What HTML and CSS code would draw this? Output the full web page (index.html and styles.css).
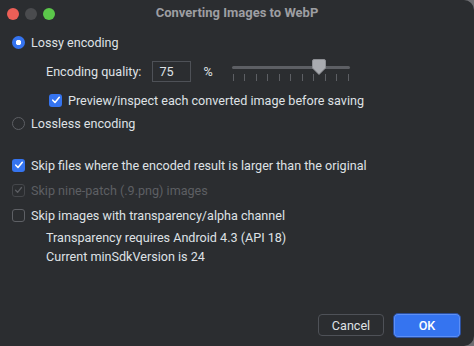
FILE: index.html
```html
<!DOCTYPE html>
<html>
<head>
<meta charset="utf-8">
<link rel="stylesheet" href="styles.css">
</head>
<body>
<div class="window">
  <div class="titlebar">
    <div class="lights">
      <span class="light red"></span>
      <span class="light gray"></span>
      <span class="light green"></span>
    </div>
    <div class="title">Converting Images to WebP</div>
  </div>
  <div class="content">
    <div class="row radio-row first">
      <span class="radio on"></span>
      <span class="label">Lossy encoding</span>
    </div>
    <div class="row quality-row">
      <span class="label">Encoding quality:</span>
      <span class="input">75</span>
      <span class="label pct">%</span>
      <div class="slider">
        <div class="track"></div>
        <svg class="thumb" width="14" height="16" viewBox="0 0 14 16"><path d="M2 0.5 H12 A1.5 1.5 0 0 1 13.5 2 V9 L7 15.5 L0.5 9 V2 A1.5 1.5 0 0 1 2 0.5 Z" fill="#a9abb0" stroke="#8c8e93" stroke-width="1"/></svg>
        <div class="ticks">
          <span></span><span></span><span></span><span></span><span></span><span></span><span></span><span></span><span></span><span></span><span></span>
        </div>
      </div>
    </div>
    <div class="row check-row preview-row">
      <span class="check on"><svg width="12" height="12" viewBox="0 0 12 12"><path d="M2.8 6.2 L5 8.5 L9.3 3.3" fill="none" stroke="#fff" stroke-width="1.6" stroke-linecap="round" stroke-linejoin="round"/></svg></span>
      <span class="label">Preview/inspect each converted image before saving</span>
    </div>
    <div class="row radio-row lossless-row">
      <span class="radio"></span>
      <span class="label">Lossless encoding</span>
    </div>
    <div class="row check-row skip-row">
      <span class="check on"><svg width="12" height="12" viewBox="0 0 12 12"><path d="M2.8 6.2 L5 8.5 L9.3 3.3" fill="none" stroke="#fff" stroke-width="1.6" stroke-linecap="round" stroke-linejoin="round"/></svg></span>
      <span class="label">Skip files where the encoded result is larger than the original</span>
    </div>
    <div class="row check-row next disabled">
      <span class="check dis"><svg width="12" height="12" viewBox="0 0 12 12"><path d="M2.8 6.2 L5 8.5 L9.3 3.3" fill="none" stroke="#5b5d62" stroke-width="1.4" stroke-linecap="round" stroke-linejoin="round"/></svg></span>
      <span class="label">Skip nine-patch (.9.png) images</span>
    </div>
    <div class="row check-row next">
      <span class="check"></span>
      <span class="label">Skip images with transparency/alpha channel</span>
    </div>
    <div class="note first-note">Transparency requires Android 4.3 (API 18)</div>
    <div class="note">Current minSdkVersion is 24</div>
  </div>
  <div class="buttons">
    <button class="btn cancel">Cancel</button>
    <button class="btn ok">OK</button>
  </div>
</div>
</body>
</html>
```
FILE: styles.css
```css
html, body {
  margin: 0;
  padding: 0;
  background: #6e6e72;
  width: 474px;
  height: 346px;
  overflow: hidden;
}
.window {
  width: 474px;
  height: 346px;
  background: #2b2d30;
  border-radius: 0 10px 10px 0;
  display: flex;
  flex-direction: column;
  font-family: Roboto, "Noto Sans", sans-serif;
  font-size: 12.6px;
  color: #dfe1e5;
  box-sizing: border-box;
}
.titlebar {
  height: 27px;
  display: flex;
  align-items: center;
  position: relative;
}
.lights {
  display: flex;
  gap: 6px;
  padding-left: 7px;
}
.light {
  width: 12px;
  height: 12px;
  border-radius: 50%;
  display: block;
}
.light.red { background: #ec5f57; }
.light.gray { background: #4a4b4e; }
.light.green { background: #5bc74a; }
.title {
  position: absolute;
  left: 0;
  right: 0;
  top: 0;
  height: 26px;
  line-height: 26px;
  text-align: center;
  font-weight: 700;
  color: #9d9ea2;
  font-size: 13px;
  pointer-events: none;
}
.content {
  flex: 1;
  display: flex;
  flex-direction: column;
  padding-left: 12px;
}
.row {
  display: flex;
  align-items: center;
  height: 20px;
}
.first { margin-top: 5px; }
.radio {
  width: 13px;
  height: 13px;
  border-radius: 50%;
  border: 1px solid #5e6065;
  box-sizing: border-box;
  margin-right: 6px;
  flex: none;
  background: #2b2d30;
}
.radio.on {
  border: none;
  background: radial-gradient(circle, #ffffff 0 2.5px, #3574f0 3px);
}
.quality-row {
  margin-top: 8px;
  height: 22px;
  padding-left: 34px;
}
.input {
  width: 39px;
  height: 21px;
  box-sizing: border-box;
  border: 1px solid #4e5157;
  margin-left: 11px;
  padding-left: 6px;
  line-height: 19px;
  display: block;
}
.pct { margin-left: 12px; }
.slider {
  margin-left: 19px;
  width: 118px;
  height: 22px;
  position: relative;
}
.track {
  position: absolute;
  left: 0;
  right: 0;
  top: 6px;
  height: 3px;
  border-radius: 2px;
  background: #5d5f64;
}
.thumb {
  position: absolute;
  left: 80px;
  top: -1px;
}
.ticks {
  position: absolute;
  left: 1px;
  right: 1px;
  top: 14px;
  display: flex;
  justify-content: space-between;
}
.ticks span {
  width: 1px;
  height: 7px;
  background: #5d5f64;
  display: block;
}
.check {
  width: 13px;
  height: 13px;
  box-sizing: border-box;
  border-radius: 3px;
  border: 1px solid #5e6065;
  margin-right: 6px;
  flex: none;
  display: flex;
  align-items: center;
  justify-content: center;
}
.check.on {
  background: #3574f0;
  border: none;
}
.check.dis {
  border-color: #45474b;
}
.preview-row {
  margin-top: 8px;
  padding-left: 37px;
}
.lossless-row { margin-top: 3px; }
.skip-row { margin-top: 22px; }
.next { margin-top: 5px; }
.disabled .label { color: #5d5f63; }
.note {
  padding-left: 34px;
  height: 19px;
  line-height: 19px;
}
.first-note { margin-top: 3px; }
.buttons {
  display: flex;
  justify-content: flex-end;
  gap: 9px;
  padding: 0 13px 8px 0;
}
.btn {
  font-family: Roboto, "Noto Sans", sans-serif;
  font-size: 12.6px;
  color: #dfe1e5;
  height: 23px;
  box-sizing: border-box;
  border-radius: 4px;
  margin: 0;
  padding: 0;
}
.cancel {
  width: 66px;
  background: #2b2d30;
  border: 1px solid #4e5157;
  margin-top: 1px;
  height: 22px;
}
.ok {
  width: 68px;
  height: 25px;
  background: #3574f0;
  border: 1px solid #2c4f9c;
  box-shadow: inset 0 0 0 1px #5d8ff5;
  color: #ffffff;
  font-weight: 500;
  border-radius: 5px;
}
```
